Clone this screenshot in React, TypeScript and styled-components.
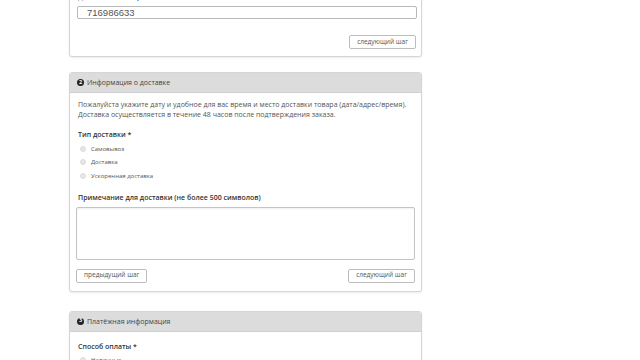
import React from 'react'
import styled, { createGlobalStyle } from 'styled-components';

const GlobalStyle = createGlobalStyle`
  html, body {
    margin: 0;
    padding: 0;
    background: #ffffff;
    overflow: hidden;
  }
  body {
    font-family: "Open Sans", "Liberation Sans", sans-serif;
    color: #555;
  }
`;

const deliveryTypes = ['Самовывоз', 'Доставка', 'Ускоренная доставка']

const App = () => {
  return (
    <>
      <GlobalStyle />
      <Page>
        <Panel>
          <Body $compact>
            <FieldLabel>Домашний телефон</FieldLabel>
            <TextInput defaultValue="716986633" />
            <Actions $end>
              <StepButton>следующий шаг</StepButton>
            </Actions>
          </Body>
        </Panel>

        <Panel>
          <Header>
            <Badge>2</Badge>
            Информация о доставке
          </Header>
          <Body>
            <Intro>
              Пожалуйста укажите дату и удобное для вас время и место доставки товара (дата/адрес/время).
              <br />
              Доставка осуществляется в течение 48 часов после подтверждения заказа.
            </Intro>
            <FieldLabel>Тип доставки *</FieldLabel>
            <RadioList>
              {deliveryTypes.map(t => (
                <RadioRow key={t}>
                  <RadioDot />
                  {t}
                </RadioRow>
              ))}
            </RadioList>
            <FieldLabel $top={12}>Примечание для доставки (не более 500 символов)</FieldLabel>
            <NoteArea />
            <Actions>
              <StepButton>предыдущий шаг</StepButton>
              <StepButton>следующий шаг</StepButton>
            </Actions>
          </Body>
        </Panel>

        <Panel $spaced>
          <Header>
            <Badge>3</Badge>
            Платёжная информация
          </Header>
          <Body>
            <FieldLabel $top={3}>Способ оплаты *</FieldLabel>
            <RadioList>
              <RadioRow>
                <RadioDot />
                Наличные
              </RadioRow>
            </RadioList>
          </Body>
        </Panel>
      </Page>
    </>
  )
}

const Page = styled.div`
  width: 353px;
  margin: -28px 0 0 69px;
  display: flex;
  flex-direction: column;
  gap: 15px;
`;

const Panel = styled.section<{ $spaced?: boolean }>`
  margin-top: ${({ $spaced }) => $spaced ? 4 : 0}px;
  border: 1px solid #d6d6d6;
  border-radius: 3px;
  box-shadow: 0 1px 2px rgba(0, 0, 0, 0.08);
  background: #fff;
  overflow: hidden;
`;

const Header = styled.div`
  height: 19px;
  background: #dcdcdc;
  border-bottom: 1px solid #d0d0d0;
  display: flex;
  align-items: center;
  gap: 3px;
  padding: 0 7px;
  font-size: 7px;
  color: #444;
`;

const Badge = styled.span`
  width: 7px;
  height: 7px;
  border-radius: 50%;
  background: #222;
  color: #fff;
  font-size: 5.5px;
  font-weight: 700;
  display: inline-flex;
  align-items: center;
  justify-content: center;
  line-height: 1;
`;

const Body = styled.div<{ $compact?: boolean }>`
  padding: ${({ $compact }) => $compact ? '8px 5px 7px 6px' : '7px 6px 8px 6px'};
  display: flex;
  flex-direction: column;
`;

const Intro = styled.p`
  margin: 0 0 0 2px;
  font-size: 7px;
  line-height: 9.5px;
  color: #555;
`;

const FieldLabel = styled.div<{ $top?: number }>`
  margin: ${({ $top }) => $top ?? 11}px 0 5px 2px;
  font-size: 7px;
  font-weight: 600;
  color: #333;
  line-height: 9px;
`;

const TextInput = styled.input`
  box-sizing: border-box;
  width: 100%;
  height: 13px;
  margin: 0 0 0 1px;
  border: 1px solid #b8b8b8;
  border-radius: 2px;
  padding: 0 9px;
  font-family: "Liberation Sans", sans-serif;
  font-size: 9.5px;
  color: #555;
  outline: none;
`;

const RadioList = styled.div`
  display: flex;
  flex-direction: column;
  gap: 4px;
  padding-left: 4px;
`;

const RadioRow = styled.label`
  display: flex;
  align-items: center;
  gap: 5px;
  height: 9.5px;
  font-size: 6px;
  color: #555;
`;

const RadioDot = styled.span`
  width: 6px;
  height: 6px;
  border-radius: 50%;
  background: #e6e6e6;
  border: 1px solid #dcdcdc;
  box-sizing: border-box;
`;

const NoteArea = styled.textarea`
  box-sizing: border-box;
  width: 100%;
  height: 53px;
  resize: none;
  border: 1px solid #c4c4c4;
  border-radius: 2px;
  box-shadow: inset 0 1px 2px rgba(0, 0, 0, 0.06);
  outline: none;
`;

const Actions = styled.div<{ $end?: boolean }>`
  display: flex;
  justify-content: ${({ $end }) => $end ? 'flex-end' : 'space-between'};
  margin-top: ${({ $end }) => $end ? 16 : 9}px;
`;

const StepButton = styled.button`
  height: 14px;
  padding: 0 7px;
  background: #fff;
  border: 1px solid #bdbdbd;
  border-radius: 2px;
  font-family: "Open Sans", "Liberation Sans", sans-serif;
  font-size: 6.5px;
  color: #555;
  line-height: 1;
  cursor: pointer;
`;

export default App
